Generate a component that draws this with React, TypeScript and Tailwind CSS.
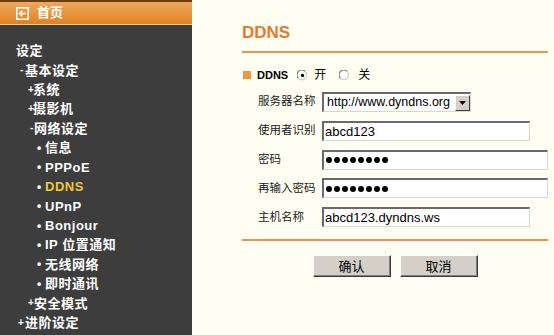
import React from "react";

type MenuItem = {
  label: string;
  pad: string;
  mark?: string;
  markW?: string;
  active?: boolean;
};

const menu: MenuItem[] = [
  { label: "设定", pad: "pl-[16px]" },
  { label: "基本设定", pad: "pl-[20px]", mark: "-", markW: "w-[5px]" },
  { label: "系统", pad: "pl-[28px]", mark: "+", markW: "w-[5px]" },
  { label: "摄影机", pad: "pl-[28px]", mark: "+", markW: "w-[5px]" },
  { label: "网络设定", pad: "pl-[30px]", mark: "-", markW: "w-[4px]" },
  { label: "信息", pad: "pl-[37px]", mark: "•", markW: "w-[8px]" },
  { label: "PPPoE", pad: "pl-[37px]", mark: "•", markW: "w-[8px]" },
  { label: "DDNS", pad: "pl-[37px]", mark: "•", markW: "w-[8px]", active: true },
  { label: "UPnP", pad: "pl-[37px]", mark: "•", markW: "w-[8px]" },
  { label: "Bonjour", pad: "pl-[37px]", mark: "•", markW: "w-[8px]" },
  { label: "IP 位置通知", pad: "pl-[37px]", mark: "•", markW: "w-[8px]" },
  { label: "无线网络", pad: "pl-[37px]", mark: "•", markW: "w-[8px]" },
  { label: "即时通讯", pad: "pl-[37px]", mark: "•", markW: "w-[8px]" },
  { label: "安全模式", pad: "pl-[28px]", mark: "+", markW: "w-[6px]" },
  { label: "进阶设定", pad: "pl-[18px]", mark: "+", markW: "w-[7px]" },
];

// classic sunken field border
const inset =
  "h-[20px] bg-white border-t-2 border-l-2 border-r border-b border-t-[#6a6a6a] border-l-[#6a6a6a] border-r-[#d8d8d2] border-b-[#d8d8d2]";

const Radio = ({ checked }: { checked?: boolean }) => (
  <svg width="11" height="11" viewBox="0 0 12 12">
    <circle cx="6" cy="6" r="5" fill="#fff" />
    <path d="M1.5 9 A5 5 0 0 1 9 1.5" stroke="#7a7a7a" strokeWidth="1.3" fill="none" />
    <path d="M9 1.5 A5 5 0 0 1 1.5 9" stroke="#d4d0c8" strokeWidth="1.3" fill="none" />
    {checked && <circle cx="6" cy="6" r="1.8" fill="#000" />}
  </svg>
);

const Dots = () => (
  <div className="flex items-center gap-[2px] pl-[2px] h-full">
    {Array.from({ length: 8 }).map((_, i) => (
      <span key={i} className="w-[6px] h-[6px] rounded-full bg-black" />
    ))}
  </div>
);

const Row = ({ label, children }: { label: string; children: React.ReactNode }) => (
  <div className="flex items-center h-[20px]">
    <div className="w-[64px] pl-[16px] text-[11.5px] text-[#1a1a1a] whitespace-nowrap box-content">{label}</div>
    {children}
  </div>
);

const Button = ({ children }: { children: React.ReactNode }) => (
  <button className="w-[78px] h-[22px] bg-[#d4d0c8] border border-t-white border-l-white border-r-[#3a3a3a] border-b-[#3a3a3a] shadow-[inset_-1px_-1px_0_#808080] text-[13px] text-black leading-none">
    {children}
  </button>
);

export default function App() {
  return (
    <div className="flex w-[554px] h-[335px] overflow-hidden font-['Liberation_Sans','Noto_Sans_CJK_SC',sans-serif]">
      {/* sidebar */}
      <div className="w-[192px] h-full bg-[#3d3d3d] text-white">
        <div className="h-[25px] flex items-center pl-[16px] border-t-2 border-b border-t-[#6b3c14] border-b-[#f4cf74] bg-linear-to-b from-[#efa85a] to-[#df831f]">
          <svg width="13" height="13" viewBox="0 0 13 13">
            <rect x="0.75" y="0.75" width="11.5" height="11.5" fill="none" stroke="#fff" strokeWidth="1.5" />
            <path d="M10 6.5H3.5M6.3 3.7L3.5 6.5L6.3 9.3" stroke="#fff" strokeWidth="1.6" fill="none" />
          </svg>
          <span className="ml-[8px] text-[13px] font-bold">首页</span>
        </div>
        <div className="pt-[16px]">
          {menu.map((m) => (
            <div key={m.label} className={`flex items-center h-[19.43px] ${m.pad}`}>
              {m.mark && (
                <span
                  className={`${m.markW} font-bold leading-none ${
                    m.mark === "•" ? "text-[12px]" : "text-[10px]"
                  }`}
                >
                  {m.mark}
                </span>
              )}
              <span
                className={`text-[13px] font-bold leading-none tracking-[0.5px] ${
                  m.active ? "text-[#f2c83a]" : "text-white"
                }`}
              >
                {m.label}
              </span>
            </div>
          ))}
        </div>
      </div>

      {/* main */}
      <div className="flex-1 h-full bg-[#fffef2] pl-[50px]">
        <div className="w-[306px]">
          <h1 className="mt-[23px] text-[17px] leading-[20px] font-bold text-[#e27b30]">DDNS</h1>
          <div className="mt-[8px] border-t-2 border-[#e8944e]" />

          <div className="mt-[14px] flex items-center h-[16px] text-[12px] text-black">
            <span className="w-[8px] h-[8px] bg-[#e89a3c] ml-[1px]" />
            <span className="ml-[6px] text-[11px] font-bold">DDNS</span>
            <span className="ml-[9px] flex"><Radio checked /></span>
            <span className="ml-[6px]">开</span>
            <span className="ml-[13px] flex"><Radio /></span>
            <span className="ml-[8px]">关</span>
          </div>

          <div className="mt-[9px] flex flex-col gap-[8.8px]">
            <Row label="服务器名称">
              <div className={`${inset} w-[149px] flex items-center`}>
                <span className="flex-1 pl-[3px] text-[12.5px] leading-none text-black whitespace-nowrap overflow-hidden">http://www.dyndns.org</span>
                <span className="w-[15px] h-[16px] bg-[#d4d0c8] border border-t-white border-l-white border-r-[#404040] border-b-[#404040] flex items-center justify-center">
                  <svg width="7" height="4" viewBox="0 0 7 4">
                    <path d="M0 0H7L3.5 4Z" fill="#000" />
                  </svg>
                </span>
              </div>
            </Row>
            <Row label="使用者识别">
              <input
                readOnly
                value="abcd123"
                className={`${inset} w-[208px] px-[1px] text-[13px] text-black outline-none`}
              />
            </Row>
            <Row label="密码">
              <div className={`${inset} w-[226px]`}>
                <Dots />
              </div>
            </Row>
            <Row label="再输入密码">
              <div className={`${inset} w-[226px]`}>
                <Dots />
              </div>
            </Row>
            <Row label="主机名称">
              <input
                readOnly
                value="abcd123.dyndns.ws"
                className={`${inset} w-[208px] px-[1px] text-[13px] text-black outline-none`}
              />
            </Row>
          </div>

          <div className="mt-[12px] border-t-2 border-[#e8944e]" />

          <div className="mt-[14px] flex justify-center gap-[9px]">
            <Button>确认</Button>
            <Button>取消</Button>
          </div>
        </div>
      </div>
    </div>
  );
}
